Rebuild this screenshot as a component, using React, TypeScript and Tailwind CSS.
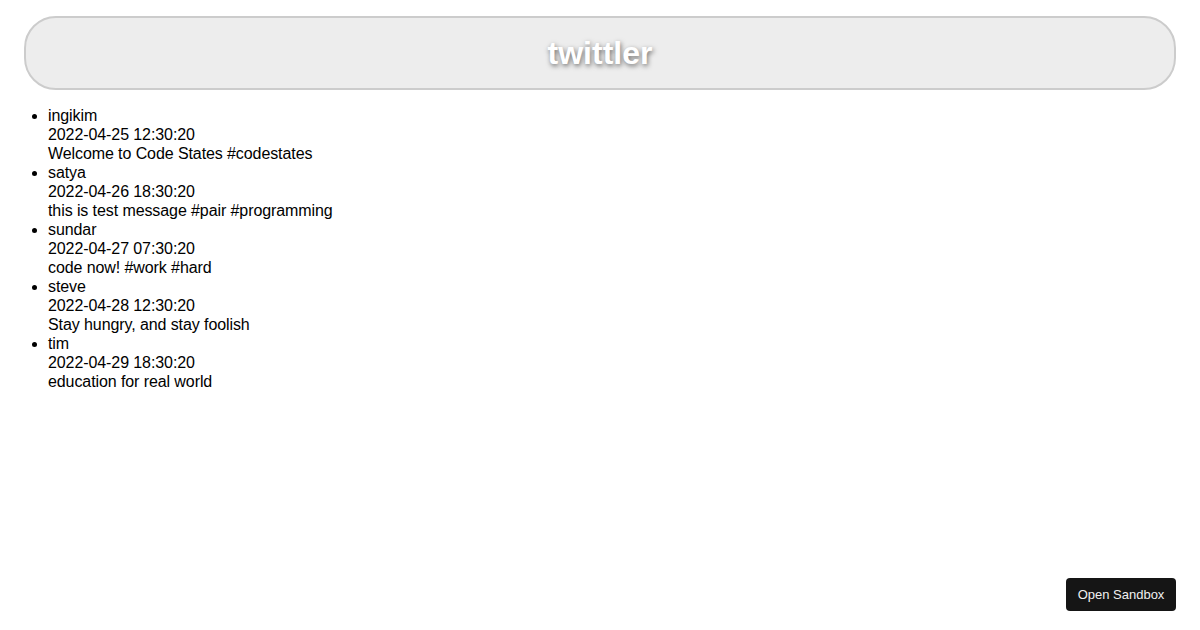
import React from 'react';

const tweets = [
  { user: 'ingikim', date: '2022-04-25 12:30:20', msg: 'Welcome to Code States #codestates' },
  { user: 'satya', date: '2022-04-26 18:30:20', msg: 'this is test message #pair #programming' },
  { user: 'sundar', date: '2022-04-27 07:30:20', msg: 'code now! #work #hard' },
  { user: 'steve', date: '2022-04-28 12:30:20', msg: 'Stay hungry, and stay foolish' },
  { user: 'tim', date: '2022-04-29 18:30:20', msg: 'education for real world' },
];

export default function App() {
  return (
    <div className="min-h-[630px] bg-white px-6 pt-4 font-['Liberation_Sans',Arial,sans-serif] text-black">
      <header className="flex h-[74px] items-center justify-center rounded-[32px] border-2 border-[#cccccc] bg-[#ededed]">
        <h1 className="text-[32px] font-bold leading-[37px] text-white [text-shadow:1px_2px_5px_rgba(0,0,0,0.55)]">
          twittler
        </h1>
      </header>

      <ul className="mt-4 list-disc pl-6 text-base leading-[19px] tracking-[-0.09px]">
        {tweets.map((t) => (
          <li key={t.user}>
            <div>{t.user}</div>
            <div>{t.date}</div>
            <div>{t.msg}</div>
          </li>
        ))}
      </ul>

      <button className="fixed bottom-[19px] right-6 flex h-[33px] w-[110px] items-center justify-center rounded-[4px] bg-[#151515] text-[13px] text-[#f0f0f0]">
        Open Sandbox
      </button>
    </div>
  );
}
